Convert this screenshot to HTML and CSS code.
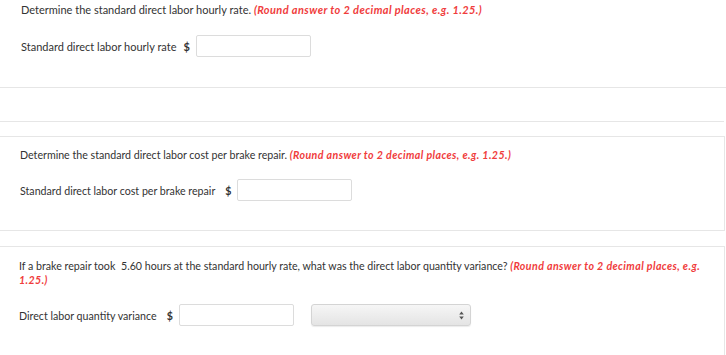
FILE: index.html
```html
<!DOCTYPE html>
<html lang="en">
<head>
  <meta charset="UTF-8">
  <title>Direct labor</title>
  <link rel="stylesheet" href="styles.css">
</head>
<body>

<!-- Part 1 -->
<div class="panel panel-top">
  <p class="question">Determine the standard direct labor hourly rate. <span class="hint">(Round answer to 2 decimal places, e.g. 1.25.)</span></p>
  <div class="answer-row">
    <label for="rate">Standard direct labor hourly rate</label>
    <span class="cur">$</span>
    <input id="rate" type="text">
  </div>
</div>
<div class="panel-spacer"></div>

<!-- Part 2 -->
<div class="panel panel-mid">
  <p class="question">Determine the standard direct labor cost per brake repair. <span class="hint">(Round answer to 2 decimal places, e.g. 1.25.)</span></p>
  <div class="answer-row">
    <label for="cost">Standard direct labor cost per brake repair</label>
    <span class="cur">$</span>
    <input id="cost" type="text">
  </div>
</div>

<!-- Part 3 -->
<div class="panel panel-last">
  <p class="question">If a brake repair took <span class="num">5.60</span> hours at the standard hourly rate, what was the direct labor quantity variance? <span class="hint">(Round answer to 2 decimal places, e.g. 1.25.)</span></p>
  <div class="answer-row">
    <label for="variance">Direct labor quantity variance</label>
    <span class="cur">$</span>
    <input id="variance" type="text">
    <div class="select">
      <svg width="5" height="9" viewBox="0 0 5 9"><path d="M2.5 0.5 L4.8 3.6 L0.2 3.6 Z M2.5 8.5 L4.8 5.4 L0.2 5.4 Z" fill="#555"/></svg>
    </div>
  </div>
</div>

</body>
</html>
```

FILE: styles.css
```css
body {
  margin: 0;
  padding: 0;
  font-family: Lato, 'Open Sans', sans-serif;
  font-size: 11px;
  color: #333;
  background: #fff;
  overflow: hidden;
}

.panel {
  background: #fff;
  border: 1px solid #e6e6e6;
  margin-left: -1px;
}

.question {
  margin: 0;
  line-height: 14px;
}

.hint {
  color: #f03c3c;
  font-weight: bold;
  font-style: italic;
  letter-spacing: 0.4px;
}

.num {
  margin-left: 3px;
}

.answer-row {
  display: flex;
  align-items: center;
  height: 22px;
  margin-top: 17px;
}

.cur {
  font-weight: bold;
  margin: 0 6px 0 7px;
}

.answer-row input {
  width: 115px;
  height: 22px;
  box-sizing: border-box;
  border: 1px solid #dcdcdc;
  border-radius: 2px;
  padding: 0 4px;
  margin: 0;
  background: #fff;
}

.select {
  width: 160px;
  height: 22px;
  box-sizing: border-box;
  margin-left: 17px;
  border: 1px solid #d4d4d4;
  border-radius: 3px;
  background: linear-gradient(#f6f6f6, #e4e4e4);
  box-shadow: 0 1px 1px rgba(0, 0, 0, 0.08);
  display: flex;
  justify-content: flex-end;
  align-items: center;
  padding-right: 6px;
}

/* Part 1 */
.panel-top {
  border-top: none;
  border-right: none;
  padding: 3px 0 30px 21px;
}

.panel-top .answer-row {
  margin-top: 18px;
}

.panel-spacer {
  height: 33px;
  border-bottom: 1px solid #e6e6e6;
  margin-right: 2px;
  margin-bottom: 14px;
}

/* Part 2 */
.panel-mid {
  width: 726px;
  box-sizing: border-box;
  font-size: 10.65px;
  padding: 11px 0 29px 20px;
  margin-bottom: 15px;
}

/* Part 3 */
.panel-last {
  width: 726px;
  box-sizing: border-box;
  font-size: 10.65px;
  padding: 12px 18px 40px 19px;
}

.panel-mid .cur,
.panel-last .cur {
  margin-left: 10px;
}
```
